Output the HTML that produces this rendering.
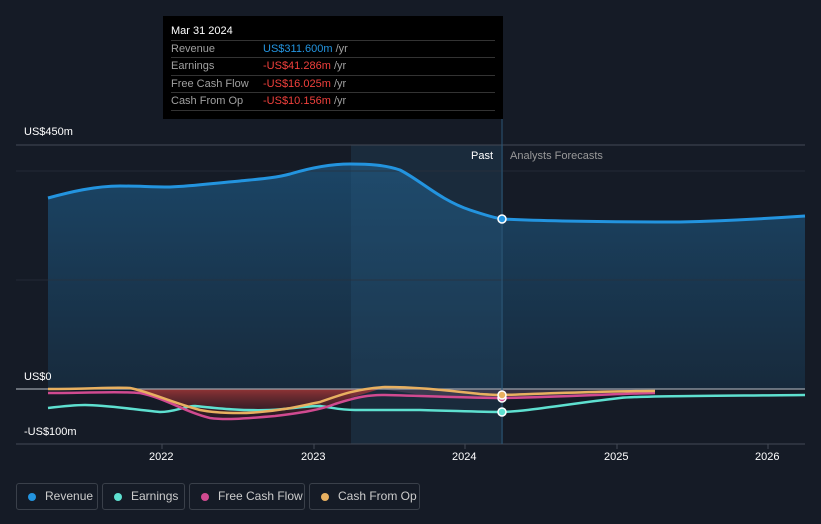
<!DOCTYPE html><html><head><style>
body{margin:0;width:821px;height:524px;background:#151b26;font-family:"Liberation Sans",sans-serif;overflow:hidden;position:relative}
.t{position:absolute;color:#fff;font-size:11px}
.tip{position:absolute;left:163px;top:16px;width:340px;height:103px;background:#000}
.tip .d{position:absolute;left:8px;top:9px;color:#fff;font-size:11px}
.row{position:absolute;left:8px;width:324px;border-top:1px solid #333;height:17px;font-size:11px;line-height:17px;color:#a0a0a0}
.row span{position:absolute;left:92px}
.b{color:#2394df}.r{color:#f0403c}.u{color:#a0a0a0}
.leg{position:absolute;top:483px;height:27px;border:1px solid #3a404a;border-radius:3px;box-sizing:border-box;color:#ccc;font-size:12px;line-height:25px;padding-left:28px}
.leg i{position:absolute;left:11px;top:9px;width:8px;height:8px;border-radius:50%}
</style></head><body>
<svg width="821" height="524" style="position:absolute;left:0;top:0">
<defs><linearGradient id="g" x1="0" y1="0" x2="0" y2="1"><stop offset="0" stop-color="#1b4566"/><stop offset="1" stop-color="#172a3c"/></linearGradient>
<linearGradient id="ng" x1="0" y1="0" x2="0" y2="1"><stop offset="0" stop-color="#b03a3a" stop-opacity=".8"/><stop offset="1" stop-color="#401820" stop-opacity=".3"/></linearGradient></defs>
<path d="M48,198 C70,192 95,186 120,186 C140,186 150,187 170,187 C195,186 215,183 240,181 C260,179 275,178 290,174 C310,168 330,164 350,164 C370,164 385,165 400,170 C420,180 440,200 470,210 C485,215 495,218 502,219 C540,221 600,222 680,222 C720,221 760,219 805,216 L805,389 L48,389 Z" fill="url(#g)"/>
<rect x="351" y="145" width="152" height="299" fill="#2a5a80" opacity=".25"/>
<line x1="16" y1="145" x2="805" y2="145" stroke="#444a55"/>
<line x1="16" y1="171" x2="805" y2="171" stroke="#2a313c" opacity=".7"/>
<line x1="16" y1="280" x2="805" y2="280" stroke="#2a313c" opacity=".7"/>
<path d="M48,389 L130,389 L165,400 L200,415 L235,419 L275,416 L315,410 L350,398 L380,389 Z" fill="url(#ng)"/>
<path d="M380,389 L502,389 L655,389 L655,393 L502,398 L430,396 Z" fill="#5a4a60" opacity=".5"/>
<line x1="16" y1="389" x2="805" y2="389" stroke="#9aa0a8" stroke-width="1.2"/>
<line x1="16" y1="444" x2="805" y2="444" stroke="#444a55"/>
<line x1="502" y1="118" x2="502" y2="444" stroke="#2a5575"/>
<path d="M48,198 C70,192 95,186 120,186 C140,186 150,187 170,187 C195,186 215,183 240,181 C260,179 275,178 290,174 C310,168 330,164 350,164 C370,164 385,165 400,170 C420,180 440,200 470,210 C485,215 495,218 502,219 C540,221 600,222 680,222 C720,221 760,219 805,216" fill="none" stroke="#2394df" stroke-width="3"/>
<path d="M48,408 C65,406 75,405 85,405 C105,405 130,409 160,412 C175,412 185,406 195,406 C215,408 240,411 270,410 C290,409 305,406 320,406 C335,408 340,410 355,410 L420,410 C460,411 480,412 502,412 C530,411 560,405 620,398 C640,396 700,396 805,395" fill="none" stroke="#5ee0d0" stroke-width="2.5"/>
<path d="M48,393 C90,393 120,391 140,393 C165,398 185,412 210,418 C225,420 240,419 275,416 C300,413 320,410 335,404 C360,396 370,395 385,395 C430,396 470,398 502,398 C560,397 610,394 655,393" fill="none" stroke="#d04a90" stroke-width="2.5"/>
<path d="M48,389 C90,389 110,387 130,388 C150,392 170,402 200,410 C215,413 240,414 260,412 C285,410 300,406 320,402 C340,395 355,389 385,387 C420,387 450,391 480,394 C495,395 500,395 502,395 C560,393 610,391 655,391" fill="none" stroke="#e8b060" stroke-width="2.5"/>
<circle cx="502" cy="219" r="4" fill="#2394df" stroke="#fff" stroke-width="1.5"/>
<circle cx="502" cy="412" r="4" fill="#5ee0d0" stroke="#fff" stroke-width="1.5"/>
<circle cx="502" cy="398" r="4" fill="#d04a90" stroke="#fff" stroke-width="1.5"/>
<circle cx="502" cy="395" r="4" fill="#e8b060" stroke="#fff" stroke-width="1.5"/>
<g stroke="#444a55"><line x1="162" y1="444" x2="162" y2="449"/><line x1="314" y1="444" x2="314" y2="449"/><line x1="465" y1="444" x2="465" y2="449"/><line x1="617" y1="444" x2="617" y2="449"/><line x1="768" y1="444" x2="768" y2="449"/></g>
</svg>
<div class="t" style="left:24px;top:126px">US$450m</div>
<div class="t" style="left:24px;top:371px">US$0</div>
<div class="t" style="left:24px;top:426px">-US$100m</div>
<div class="t" style="left:471px;top:150px">Past</div>
<div class="t" style="left:510px;top:150px;color:#999">Analysts Forecasts</div>
<div class="t" style="left:149px;top:451px">2022</div>
<div class="t" style="left:301px;top:451px">2023</div>
<div class="t" style="left:452px;top:451px">2024</div>
<div class="t" style="left:604px;top:451px">2025</div>
<div class="t" style="left:755px;top:451px">2026</div>
<div class="tip"><div class="d">Mar 31 2024</div>
<div class="row" style="top:24px">Revenue<span><b class="b" style="font-weight:normal">US$311.600m</b> <span class="u" style="position:static">/yr</span></span></div>
<div class="row" style="top:41px">Earnings<span><b class="r" style="font-weight:normal">-US$41.286m</b> <span class="u" style="position:static">/yr</span></span></div>
<div class="row" style="top:59px">Free Cash Flow<span><b class="r" style="font-weight:normal">-US$16.025m</b> <span class="u" style="position:static">/yr</span></span></div>
<div class="row" style="top:76px">Cash From Op<span><b class="r" style="font-weight:normal">-US$10.156m</b> <span class="u" style="position:static">/yr</span></span></div>
<div class="row" style="top:94px;height:0"></div>
</div>
<div class="leg" style="left:16px;width:82px"><i style="background:#2394df"></i>Revenue</div>
<div class="leg" style="left:102px;width:83px"><i style="background:#5ee0d0"></i>Earnings</div>
<div class="leg" style="left:189px;width:116px"><i style="background:#d04a90"></i>Free Cash Flow</div>
<div class="leg" style="left:309px;width:111px"><i style="background:#e8b060"></i>Cash From Op</div>
</body></html>
